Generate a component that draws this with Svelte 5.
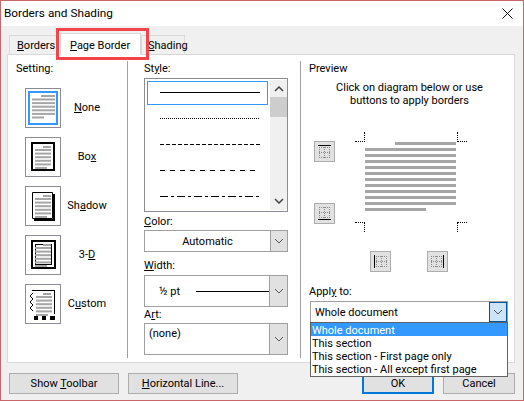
<script>
  const settings = [
    { id: 'none', label: 'None', key: 0 },
    { id: 'box', label: 'Box', key: 2 },
    { id: 'shadow', label: 'Shadow', key: 2 },
    { id: '3d', label: '3-D', key: 2 },
    { id: 'custom', label: 'Custom', key: 1 }
  ];
  const styles = ['', '1 1', '4 2', '5 5', '8 3 3 3'];
  const applyOptions = ['Whole document', 'This section', 'This section - First page only', 'This section - All except first page'];
  const pageRows = Array.from({ length: 12 }, (_, i) => i);
  const thumbRows = [0, 1, 2, 3, 4, 5];
  const gridShift = { top: '0 1', bottom: '0 -1', left: '1 0', right: '-1 0' };

  function keyed(label, key) {
    return [label.slice(0, key), label[key], label.slice(key + 1)];
  }
</script>

{#snippet chevron()}
  <svg class="chev" width="10" height="6" viewBox="0 0 10 6"><path d="M1 1l4 4 4-4" fill="none" stroke="#555" /></svg>
{/snippet}

{#snippet miniGrid(side)}
  <svg width="21" height="21" viewBox="0 0 21 21">
    <g fill="none" stroke="#8a8a8a" stroke-dasharray="1 1" transform="translate({gridShift[side]})">
      <path d="M5 5.500h11M5 10.500h11M5 15.500h11M5.500 5v11M10.500 5v11M15.500 5v11" />
    </g>
    {#if side === 'top'}<path d="M4 4.500h13" stroke="#000" />{/if}
    {#if side === 'bottom'}<path d="M4 16.500h13" stroke="#000" />{/if}
    {#if side === 'left'}<path d="M4.500 4v13" stroke="#000" />{/if}
    {#if side === 'right'}<path d="M16.500 4v13" stroke="#000" />{/if}
  </svg>
{/snippet}

{#snippet thumb(id)}
  <svg width="34" height="38" viewBox="0 0 34 38">
    {#if id === 'none'}
      <rect x="3" y="3" width="28" height="32" fill="none" stroke="#3399ff" stroke-width="2" />
    {:else if id === 'box'}
      <rect x="6" y="5" width="22" height="27" fill="none" stroke="#000" stroke-width="2" />
    {:else if id === 'shadow'}
      <path d="M6.500 5.500h20v26h-20z" fill="none" stroke="#000" />
      <path d="M28 7v26H8" fill="none" stroke="#000" stroke-width="2" />
    {:else if id === '3d'}
      <rect x="6" y="5" width="23" height="27" fill="none" stroke="#000" stroke-width="2" />
      <rect x="9.500" y="8.500" width="16" height="20" fill="none" stroke="#000" />
    {:else}
      <path d="M6 5.500h22M28.500 5v24" fill="none" stroke="#000" />
      <path d="M7 8l-3 3 3 3-3 3 3 3-3 3 3 3" fill="none" stroke="#000" />
      <path d="M8 31h4v4H8zM16 31h4v4h-4zM24 31h5v4h-5z" fill="#000" />
    {/if}
    <g fill="#a6a6a6">
      <rect x={id === 'none' ? 15 : 17} y={id === 'none' ? 6 : 8} width={id === 'none' ? 14 : 8} height="2" />
      {#each thumbRows as r}
        <rect
          x={id === 'none' ? 6 : id === 'custom' ? 10 : 9}
          y={(id === 'none' ? 9.500 : 11) + r * 3.600}
          width={r === 5 ? 12 : id === 'none' ? 23 : 16}
          height="2"
        />
      {/each}
    </g>
  </svg>
{/snippet}

<div class="win">
  <header class="title">
    <span>Borders and Shading</span>
    <svg class="close" width="11" height="11" viewBox="0 0 11 11"><path d="M.5.500l10 10M10.500.500l-10 10" stroke="#111" fill="none" /></svg>
  </header>

  <div class="body">
    <div class="tabs">
      <div class="tab"><u>B</u>orders</div>
      <div class="tab active"><u>P</u>age Border</div>
      <div class="tab last"><u>S</u>hading</div>
    </div>
    <div class="callout"></div>

    <div class="panel">
      <section class="setting">
        <div class="lbl">Setting:</div>
        <div class="thumbs">
          {#each settings as s}
            {@const [a, k, b] = keyed(s.label, s.key)}
            <div class="thumb-row">
              <div class="thumb">{@render thumb(s.id)}</div>
              <div class="thumb-label">{a}<u>{k}</u>{b}</div>
            </div>
          {/each}
        </div>
      </section>

      <section class="style">
        <div class="lbl">St<u>y</u>le:</div>
        <div class="stylelist">
          <div class="styles">
            {#each styles as dash, i}
              <div class="style-item" class:sel={i === 0}>
                <svg width="100" height="1" viewBox="0 0 100 1"><line x1="0" y1=".5" x2="100" y2=".5" stroke="#000" stroke-dasharray={dash} /></svg>
              </div>
            {/each}
          </div>
          <div class="vscroll">
            <svg width="10" height="6" viewBox="0 0 10 6"><path d="M1 5l4-4 4 4" fill="none" stroke="#444" stroke-width="1.500" /></svg>
            <div class="vthumb"></div>
            <svg width="10" height="6" viewBox="0 0 10 6"><path d="M1 1l4 4 4-4" fill="none" stroke="#444" stroke-width="1.500" /></svg>
          </div>
        </div>

        <div class="lbl l-color"><u>C</u>olor:</div>
        <div class="combo h22">
          <div class="val center">Automatic</div>
          <div class="drop">{@render chevron()}</div>
        </div>

        <div class="lbl l-width"><u>W</u>idth:</div>
        <div class="combo h32">
          <div class="val width-val"><span>½ pt</span><i></i></div>
          <div class="drop">{@render chevron()}</div>
        </div>

        <div class="lbl l-art">A<u>r</u>t:</div>
        <div class="combo h32">
          <div class="val top">(none)</div>
          <div class="drop">{@render chevron()}</div>
        </div>
      </section>

      <section class="preview">
        <div class="lbl">Preview</div>
        <p class="hint">Click on diagram below or use<br />buttons to apply borders</p>

        <div class="diagram">
          <div class="side">
            <div class="mini">{@render miniGrid('top')}</div>
            <div class="mini">{@render miniGrid('bottom')}</div>
          </div>
          <div class="sheet">
            <span class="crop tl"></span><span class="crop tr"></span><span class="crop bl"></span><span class="crop br"></span>
            {#each pageRows as r}
              <div class="row" class:first={r === 0} class:lastrow={r === 11}></div>
            {/each}
          </div>
        </div>
        <div class="under">
          <div class="mini">{@render miniGrid('left')}</div>
          <div class="mini">{@render miniGrid('right')}</div>
        </div>

        <div class="lbl l-apply">Appl<u>y</u> to:</div>
        <div class="apply">
          <div class="combo h22">
            <div class="val">Whole document</div>
            <div class="drop hot">{@render chevron()}</div>
          </div>
          <ul class="options">
            {#each applyOptions as o, i}
              <li class:hi={i === 0}>{o}</li>
            {/each}
          </ul>
        </div>
      </section>
    </div>

    <footer class="foot">
      <button>Show <u>T</u>oolbar</button>
      <button><u>H</u>orizontal Line...</button>
      <div class="spacer"></div>
      <button class="small def">OK</button>
      <button class="small">Cancel</button>
    </footer>
  </div>
</div>

<style>
  :global(body) { margin: 0; background: #f0f0f0; }
  .win {
    position: relative;
    width: 524px; height: 401px; box-sizing: border-box;
    border: 1px solid #c8666a;
    display: flex; flex-direction: column;
    font: 11px/13px Roboto, "Noto Sans", sans-serif;
    color: #000;
    background: #f0f0f0;
    overflow: hidden;
  }
  .title {
    height: 25px; background: #fff; flex-shrink: 0;
    display: flex; align-items: center; justify-content: space-between;
    padding: 0 12px 0 3px;
    font-size: 11.800px;
  }
  .close { margin-right: -2px; }

  .body { flex: 1; display: flex; flex-direction: column; padding: 0 8px 0 6px; }

  .tabs { display: flex; height: 28px; align-items: flex-end; padding-left: 2px; position: relative; top: 1px; }
  .tab {
    width: 48px; height: 19px; margin-bottom: 1px; box-sizing: border-box; padding: 3px 0 0 7px;
    border: 1px solid #d9d9d9; border-bottom: 0; background: #f0f0f0;
  }
  .tab.active {
    height: 22px; width: 81px; padding: 5px 0 0 9px; background: #fff; position: relative; z-index: 2;
    margin: 0 0 0 3px; border-bottom: 1px solid #fff;
  }
  .tab.last { width: 44px; padding-left: 6px; }
  .callout {
    position: absolute; left: 55px; top: 27px; width: 93px; height: 32px; box-sizing: border-box;
    border: 3px solid #f4444a; z-index: 3;
  }

  .panel {
    height: 309px; box-sizing: border-box;
    border: 1px solid #d9d9d9; background: #fff;
    display: flex;
    padding-top: 6px;
  }
  section { box-sizing: border-box; height: 297px; }
  .lbl { height: 13px; }
  .setting { width: 120px; border-right: 1px solid #a0a0a0; padding: 1px 0 0 8px; }
  .thumbs { display: flex; flex-direction: column; gap: 9px; margin-top: 13px; }
  .thumb-row { display: flex; align-items: center; }
  .thumb { width: 34px; height: 38px; border: 1px solid #8c8c94; margin-left: 9px; flex-shrink: 0; }
  .thumb svg { display: block; }
  .thumb-label { flex: 1; text-align: center; padding-right: 14px; margin-bottom: 2px; }

  .style { width: 173px; border-right: 1px solid #a0a0a0; padding: 1px 12px 0 16px; }
  .stylelist {
    margin-top: 3px; height: 134px; box-sizing: border-box;
    border: 1px solid #8c8c94; display: flex;
  }
  .styles { flex: 1; padding: 2px; overflow: hidden; }
  .style-item { height: 26px; display: flex; align-items: center; padding: 0 0 0 13px; box-sizing: border-box; }
  .style-item svg { display: block; }
  .style-item.sel { height: 24px; border: 1px solid #3399ff; padding: 0 0 2px 12px; }
  .vscroll {
    width: 17px; background: #f0f0f0; display: flex; flex-direction: column; align-items: center;
    padding-top: 6px; margin: 1px 0; box-sizing: border-box;
  }
  .vscroll svg:last-child { margin-top: auto; margin-bottom: 6px; }
  .vthumb { width: 100%; height: 20px; background: #cdcdcd; margin-top: 5px; }

  .combo { display: flex; box-sizing: border-box; border: 1px solid #a0a0a0; background: #fff; }
  .h22 { height: 22px; }
  .h32 { height: 32px; }
  .val { flex: 1; padding: 3px 4px; min-width: 0; }
  .h22 .val { padding-top: 4px; }
  .val.center { text-align: center; }
  .drop {
    width: 16px; background: #e1e1e1; border-left: 1px solid #a0a0a0;
    display: flex; align-items: center; justify-content: center;
  }
  .h32 .drop { width: 17px; }
  .drop.hot { background: #cce4f7; border: 1px solid #005499; }
  .val.width-val { display: flex; align-items: center; padding-left: 14px; padding-right: 0; }
  .width-val i { flex: 1; margin-left: 16px; height: 1px; background: #000; }
  .l-color { margin-top: 1px; height: 15px; padding-top: 2px; }
  .l-width { margin-top: 5px; height: 16px; padding-top: 2px; }
  .l-art { margin-top: 1px; height: 15px; }

  .preview { flex: 1; padding: 1px 6px 0 8px; position: relative; }
  .hint { margin: 6px 0 0; text-align: center; padding-left: 2px; }
  .diagram { display: flex; margin-top: 34px; margin-left: 5px; }
  .side { width: 21px; display: flex; flex-direction: column; gap: 41px; }
  .mini {
    width: 19px; height: 19px; border: 1px solid #adadad; background: #e1e1e1;
  }
  .mini svg { display: block; margin: -1px; }
  .sheet { position: relative; margin-left: 30px; width: 91px; padding-top: 1px; }
  .row { height: 3px; margin-bottom: 3px; background: #a6a6a6; }
  .row.first { margin-left: 30px; }
  .row.lastrow { margin-right: 30px; }
  .crop { position: absolute; width: 9px; height: 9px; }
  .tl { left: -10px; top: -9px; border-right: 1px dotted #000; border-bottom: 1px dotted #000; }
  .tr { right: -11px; top: -9px; border-left: 1px dotted #000; border-bottom: 1px dotted #000; }
  .bl { left: -10px; bottom: -8px; border-right: 1px dotted #000; border-top: 1px dotted #000; }
  .br { right: -11px; bottom: -8px; border-left: 1px dotted #000; border-top: 1px dotted #000; }
  .under { display: flex; gap: 36px; margin: 27px 0 0 61px; }

  .l-apply { margin-top: 13px; }
  .apply { position: relative; margin-top: 3px; margin-left: 1px; z-index: 4; }
  .options {
    position: absolute; left: 0; right: 0; top: 21px; margin: 0; padding: 0 0 1px;
    list-style: none; background: #fff; border: 1px solid #646464;
  }
  .options li { height: 13px; line-height: 15px; padding-left: 1px; white-space: nowrap; }
  .options li.hi { background: #3399ff; color: #fff; }

  .foot { display: flex; gap: 9px; padding: 10px 0 0 2px; }
  .spacer { flex: 1; }
  button {
    width: 110px; height: 21px; box-sizing: border-box; padding: 0;
    border: 1px solid #adadad; background: #e1e1e1; font: inherit; color: #000;
  }
  .small { width: 72px; }
  .def { border: 2px solid #0078d7; }
</style>
